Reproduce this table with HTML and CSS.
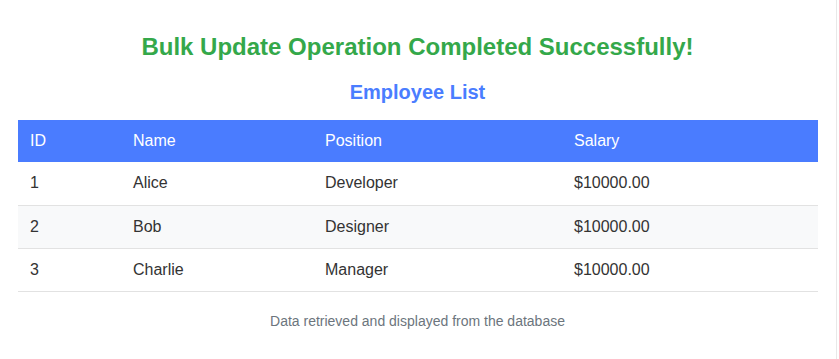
FILE: index.html
```html
<!DOCTYPE html>
<html lang="en">
<head>
<meta charset="utf-8">
<title>Employee List</title>
<link rel="stylesheet" href="styles.css">
</head>
<body>
<div class="container">
  <h1 class="title">Bulk Update Operation Completed Successfully!</h1>
  <h2 class="subtitle">Employee List</h2>
  <table class="table">
    <thead>
      <tr>
        <th class="col-id">ID</th>
        <th class="col-name">Name</th>
        <th class="col-pos">Position</th>
        <th class="col-sal">Salary</th>
      </tr>
    </thead>
    <tbody>
      <tr><td>1</td><td>Alice</td><td>Developer</td><td>$10000.00</td></tr>
      <tr><td>2</td><td>Bob</td><td>Designer</td><td>$10000.00</td></tr>
      <tr><td>3</td><td>Charlie</td><td>Manager</td><td>$10000.00</td></tr>
    </tbody>
  </table>
  <p class="footer">Data retrieved and displayed from the database</p>
</div>
</body>
</html>
```
FILE: styles.css
```css
html, body {
  margin: 0;
  padding: 0;
  background: #ffffff;
}
body {
  font-family: "Liberation Sans", Arial, sans-serif;
  color: #333333;
}
.container {
  min-height: 359px;
  box-sizing: border-box;
  width: 837px;
  padding: 33px 19px 20px 18px;
  background: #ffffff;
  border-right: 1px solid #e8e8e8;
}
.title {
  margin: 0;
  text-align: center;
  font-size: 24px;
  line-height: 28px;
  font-weight: bold;
  color: #34a84a;
}
.subtitle {
  margin: 19px 0 0;
  text-align: center;
  font-size: 20px;
  line-height: 24px;
  font-weight: bold;
  color: #4a7dff;
}
.table {
  margin-top: 16px;
  width: 800px;
  border-collapse: collapse;
  font-size: 16px;
}
.table th {
  background: #4a7cff;
  color: #ffffff;
  font-weight: normal;
  text-align: left;
  padding: 0 12px;
  height: 42px;
}
.table td {
  text-align: left;
  padding: 0 12px;
  height: 43px;
  border-bottom: 1px solid #e2e2e2;
}
.table tbody tr:nth-child(even) td {
  background: #f8f9fa;
}
.col-id { width: 103px; }
.col-name { width: 192px; }
.col-pos { width: 249px; }
.col-sal { width: 256px; }
.table th, .table td { box-sizing: border-box; }
.footer {
  margin: 21px 0 0;
  text-align: center;
  font-size: 14px;
  line-height: 16px;
  color: #6c757d;
}
```
